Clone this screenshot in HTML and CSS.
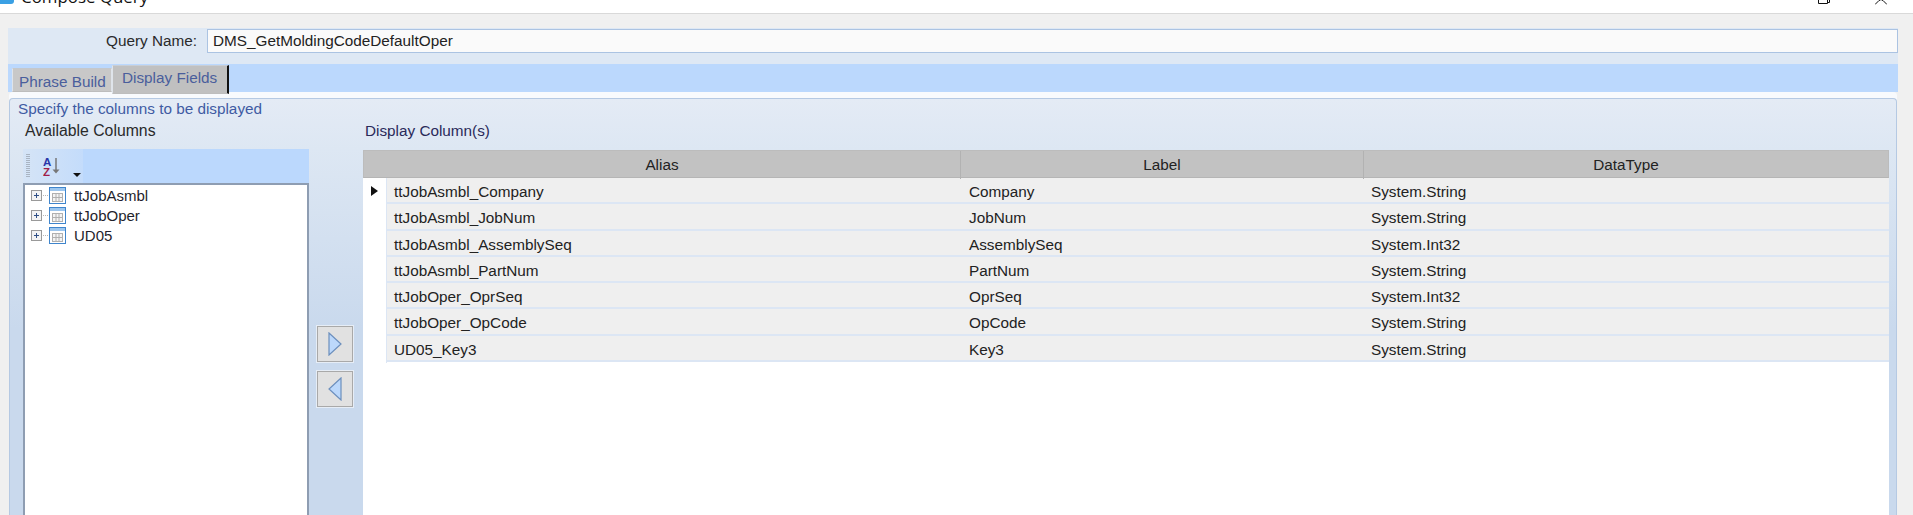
FILE: index.html
```html
<!DOCTYPE html>
<html lang="en">
<head>
<meta charset="utf-8">
<title>Compose Query</title>
<link rel="stylesheet" href="styles.css">
</head>
<body>
<svg class="defs" width="0" height="0" aria-hidden="true">
  <symbol id="tbl" viewBox="0 0 17 17">
    <rect x=".5" y=".5" width="16" height="16" fill="#fff" stroke="#3f85cc"/>
    <rect x="1" y="1" width="15" height="3" fill="#9cc6ee"/>
    <rect x="3.5" y="6.5" width="10" height="8" fill="#f4f4f4" stroke="#b0b0b0"/>
    <path d="M7 6.500v8M10 6.500v8M3.500 10.500h10" stroke="#b0b0b0" fill="none"/>
  </symbol>
  <symbol id="plus" viewBox="0 0 18 11">
    <rect x=".5" y=".5" width="10" height="10" fill="#f3f3f3" stroke="#9a9a9a"/>
    <path d="M3 5.500h5M5.500 3v5" stroke="#2f4f86" fill="none"/>
    <path d="M12 5.500h6" stroke="#b5b5b5" stroke-dasharray="1 1" fill="none"/>
  </symbol>
</svg>
<header class="titlebar">
  <span class="app-icon"></span>
  <span class="title">Compose Query</span>
  <span class="win-btns">
    <svg class="restore" width="12" height="4" viewBox="0 0 12 4"><path d="M.5 0v3.500h9V0M9.500 2.500h2V0" fill="none" stroke="#111"/></svg>
    <svg class="close" width="12" height="5" viewBox="0 0 12 5"><path d="M0 4.500L4 .5 5.500 0M12 4.500L8 .5 6.500 0" fill="none" stroke="#111"/></svg>
  </span>
</header>
<main class="window">
  <div class="query-row">
    <label class="query-label">Query Name:</label>
    <div class="query-input">DMS_GetMoldingCodeDefaultOper</div>
  </div>
  <div class="tabs">
    <div class="tab">Phrase Build</div>
    <div class="tab tab-active">Display Fields</div>
  </div>
  <section class="panel">
    <p class="hint">Specify the columns to be displayed</p>
    <div class="columns">
      <div class="left">
        <div class="left-title">Available Columns</div>
        <div class="toolbar">
          <div class="tool-group">
            <span class="grip"></span>
            <svg class="sort" width="20" height="18" viewBox="0 0 20 18">
              <text x="0" y="8" class="az-a">A</text>
              <text x="0" y="17.500" class="az-z">Z</text>
              <path d="M13 0v14" stroke="#777" stroke-width="1.500" fill="none"/>
              <path d="M9.500 11.500h7l-3.500 4z" fill="#777"/>
            </svg>
            <span class="caret"></span>
          </div>
        </div>
        <div class="tree">
          <div class="tree-row"><svg class="plus" width="18" height="11"><use href="#plus"/></svg><svg class="tbl" width="17" height="17"><use href="#tbl"/></svg><span>ttJobAsmbl</span></div>
          <div class="tree-row"><svg class="plus" width="18" height="11"><use href="#plus"/></svg><svg class="tbl" width="17" height="17"><use href="#tbl"/></svg><span>ttJobOper</span></div>
          <div class="tree-row"><svg class="plus" width="18" height="11"><use href="#plus"/></svg><svg class="tbl" width="17" height="17"><use href="#tbl"/></svg><span>UD05</span></div>
        </div>
      </div>
      <div class="mover">
        <button class="move-btn" type="button" aria-label="Add">
          <svg width="14" height="24" viewBox="0 0 14 24"><path d="M1 1l12 11L1 23z" fill="#bcd8fb" stroke="#6c8fbd" stroke-width="1.200"/></svg>
        </button>
        <button class="move-btn" type="button" aria-label="Remove">
          <svg width="14" height="24" viewBox="0 0 14 24"><path d="M13 1L1 12l12 11z" fill="#bcd8fb" stroke="#6c8fbd" stroke-width="1.200"/></svg>
        </button>
      </div>
      <div class="right">
        <div class="right-title">Display Column(s)</div>
        <div class="grid">
          <div class="grid-head"><span>Alias</span><span>Label</span><span>DataType</span></div>
          <div class="grid-row"><span class="row-head"><i class="pointer"></i></span><span>ttJobAsmbl_Company</span><span>Company</span><span>System.String</span></div>
          <div class="grid-row"><span class="row-head"></span><span>ttJobAsmbl_JobNum</span><span>JobNum</span><span>System.String</span></div>
          <div class="grid-row"><span class="row-head"></span><span>ttJobAsmbl_AssemblySeq</span><span>AssemblySeq</span><span>System.Int32</span></div>
          <div class="grid-row"><span class="row-head"></span><span>ttJobAsmbl_PartNum</span><span>PartNum</span><span>System.String</span></div>
          <div class="grid-row"><span class="row-head"></span><span>ttJobOper_OprSeq</span><span>OprSeq</span><span>System.Int32</span></div>
          <div class="grid-row"><span class="row-head"></span><span>ttJobOper_OpCode</span><span>OpCode</span><span>System.String</span></div>
          <div class="grid-row"><span class="row-head"></span><span>UD05_Key3</span><span>Key3</span><span>System.String</span></div>
        </div>
      </div>
    </div>
  </section>
</main>
</body>
</html>
```

FILE: styles.css
```css
* { box-sizing: border-box; }
html, body { margin: 0; height: 515px; overflow: hidden; }
body {
  background: #f0f0f0;
  font: 15.300px "Liberation Sans", Arial, sans-serif;
  color: #222;
  display: flex;
  flex-direction: column;
}
.defs { position: absolute; }

.titlebar {
  height: 14px;
  flex: none;
  background: #fff;
  border-bottom: 1px solid #d9d9d9;
  display: flex;
  align-items: flex-end;
  overflow: hidden;
  position: relative;
}
.app-icon {
  width: 14px;
  height: 4px;
  margin-bottom: 9px;
  background: #3aa0e4;
  border-radius: 0 0 3px 0;
  flex: none;
}
.title {
  font: 16.900px/20px "Open Sans", "Noto Sans", sans-serif;
  color: #111;
  margin-left: 7px;
  margin-bottom: 6px;
}
.win-btns {
  margin-left: auto;
  align-self: flex-start;
  display: flex;
  gap: 45px;
  margin-right: 26px;
}
.restore, .close { display: block; }

.window {
  flex: 1;
  margin: 14px 15px 0 8px;
  min-height: 0;
  display: flex;
  flex-direction: column;
}
.query-row {
  height: 36px;
  flex: none;
  background: #dee8f4;
  display: flex;
  align-items: flex-start;
  padding-top: 1px;
}
.query-label {
  width: 189px;
  text-align: right;
  line-height: 23px;
  color: #2a2a2a;
  flex: none;
}
.query-input {
  flex: 1;
  margin-left: 10px;
  height: 24px;
  line-height: 22px;
  padding-left: 5px;
  background: #fafafa;
  border: 1px solid #abc3e2;
  color: #222;
}
.tabs {
  height: 28px;
  flex: none;
  background: #bbd8fd;
  display: flex;
  align-items: flex-start;
  padding-left: 4px;
  position: relative;
}
.tab {
  width: 100px;
  height: 24px;
  margin-top: 4px;
  padding-left: 6px;
  line-height: 25px;
  color: #4a5e9c;
  background: #c8c8c8;
  border: 1px solid #dfe4ea;
  border-bottom-color: #bdbdbd;
  border-top-color: #c4c8cd;
}
.tab-active {
  width: 117px;
  height: 29px;
  margin-top: 1px;
  padding-left: 9px;
  line-height: 24px;
  background: #c0c0c0;
  border-right: 2px solid #111;
  border-top-color: #c8ced6;
  position: relative;
  z-index: 1;
}
.panel {
  flex: 1;
  min-height: 0;
  margin: 6px 1px 0;
  padding: 0 7px 0 1px;
  border: 1px solid #b5c9e3;
  border-bottom: 0;
  border-radius: 4px 4px 0 0;
  background: linear-gradient(#e4ebf5 0, #dde7f3 50px, #c9d9ed 230px);
  box-shadow: 0 -6px 0 #f8fafd;
  display: flex;
  flex-direction: column;
}
.hint {
  margin: 2px 0 0 7px;
  line-height: 15px;
  color: #3f5ba3;
  height: 15px;
}
.columns {
  flex: 1;
  min-height: 0;
  display: flex;
}
.left {
  width: 286px;
  margin-left: 12px;
  flex: none;
  display: flex;
  flex-direction: column;
}
.left-title {
  height: 33px;
  padding: 7px 0 0 2px;
  line-height: 15px;
  color: #2a2a2a;
  font-size: 15.800px;
}
.toolbar {
  height: 34px;
  flex: none;
  background: #bbd8fd;
}
.tool-group {
  width: 60px;
  height: 34px;
  background: linear-gradient(90deg, #d5e4f6, #c4dcfb);
  display: flex;
  align-items: flex-start;
  padding: 5px 0 0 3px;
}
.grip {
  width: 4px;
  height: 24px;
  background: repeating-linear-gradient(#a9b4c2 0 1px, transparent 1px 2px);
  flex: none;
}
.sort { margin: 4px 0 0 13px; }
.az-a, .az-z { font: bold 11.500px "Liberation Sans", sans-serif; }
.az-a { fill: #2a36a8; }
.az-z { fill: #a01c48; }
.caret {
  width: 0;
  height: 0;
  margin: 19px 0 0 10px;
  border: 4px solid transparent;
  border-top-color: #111;
  border-bottom: 0;
}
.tree {
  flex: 1;
  min-height: 0;
  background: #fff;
  border: 2px solid #8e9db2;
  border-bottom: 0;
}
.tree-row {
  height: 20px;
  display: flex;
  align-items: center;
  padding-left: 6px;
  font-size: 15px;
  color: #1f1f2d;
}
.plus { flex: none; }
.tbl { flex: none; }
.tree-row span { margin-left: 8px; }

.mover {
  width: 54px;
  flex: none;
  display: flex;
  flex-direction: column;
  align-items: flex-start;
  gap: 9px;
  padding: 210px 0 0 8px;
}
.move-btn {
  width: 36px;
  height: 36px;
  padding: 0;
  background: #e1e1e1;
  border: 1px solid #a9a9a9;
  box-shadow: 0 0 0 1px #e6edf6;
  display: flex;
  align-items: center;
  justify-content: center;
}
.right {
  flex: 1;
  min-width: 0;
  display: flex;
  flex-direction: column;
}
.right-title {
  height: 34px;
  padding: 7px 0 0 2px;
  line-height: 15px;
  color: #2a2a5a;
}
.grid {
  flex: 1;
  min-height: 0;
  background: #fff;
}
.grid-head {
  height: 28px;
  background: #c2c2c2;
  border: 1px solid #bcbcbc;
  border-bottom: 1px solid #b5b5b5;
  display: grid;
  grid-template-columns: 597px 403px 1fr;
}
.grid-head span {
  text-align: center;
  line-height: 28px;
  color: #222;
  border-right: 1px solid #b2b2b2;
}
.grid-head span:last-child { border-right: 0; }
.grid-row {
  height: 26.300px;
  display: grid;
  grid-template-columns: 24px 575px 402px 1fr;
  background: #efefef;
  border-bottom: 2px solid #dce6f4;
  line-height: 27px;
  color: #222;
}
.grid-row span { padding-left: 7px; }
.grid-row .row-head {
  padding: 0;
  background: #fff;
  border-right: 1px solid #dce6f4;
  display: flex;
  align-items: center;
  justify-content: center;
}
.pointer {
  width: 0;
  height: 0;
  margin-bottom: 2px;
  border: 5px solid transparent;
  border-left: 7px solid #111;
  border-right: 0;
}
```
